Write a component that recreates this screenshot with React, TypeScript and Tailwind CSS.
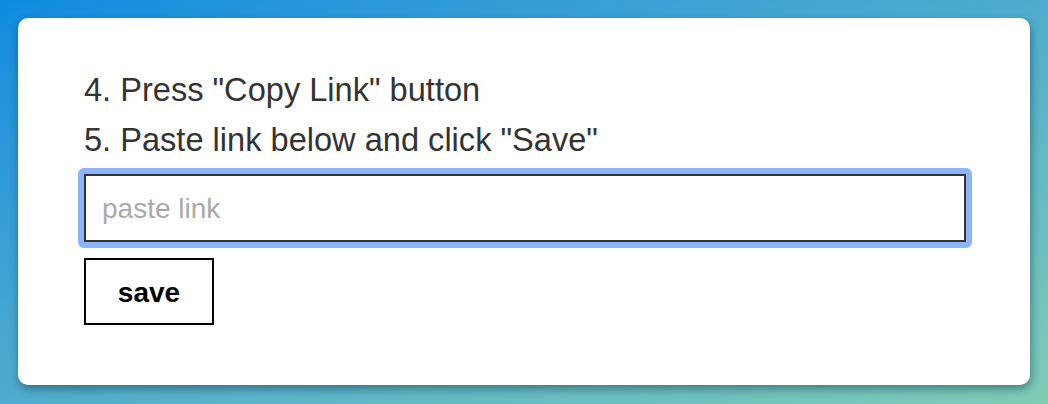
export default function App() {
  return (
    <div
      className="flex h-[404px] w-[1048px] items-start bg-linear-to-br from-[#0c8be0] to-[#7fccb4] p-[18px]"
      style={{ fontFamily: '"Liberation Sans", Arial, sans-serif' }}
    >
      <div className="flex h-[367px] w-[1012px] flex-col rounded-[10px] bg-white pt-[47px] pl-[66px] pr-[64px] shadow-[1px_4px_10px_rgba(0,40,60,0.45)]">
        <p className="text-[32.6px] leading-[50px] text-[#333]">4. Press "Copy Link" button</p>
        <p className="text-[32.6px] leading-[50px] text-[#333]">5. Paste link below and click "Save"</p>

        {/* focus ring round the link field */}
        <div className="mt-[3px] -mx-[6px] rounded-[6px] bg-[#8db4f8] p-[6px]">
          <input
            type="text"
            placeholder="paste link"
            className="block h-[68px] w-full border-2 border-[#333] bg-white px-4 pt-[2px] text-[28px] text-[#333] outline-none placeholder:text-[#a9a9a9]"
          />
        </div>

        <button className="mt-[10px] h-[67px] w-[130px] border-2 border-black bg-white pt-[3px] text-[28px] font-bold text-black">
          save
        </button>
      </div>
    </div>
  );
}
